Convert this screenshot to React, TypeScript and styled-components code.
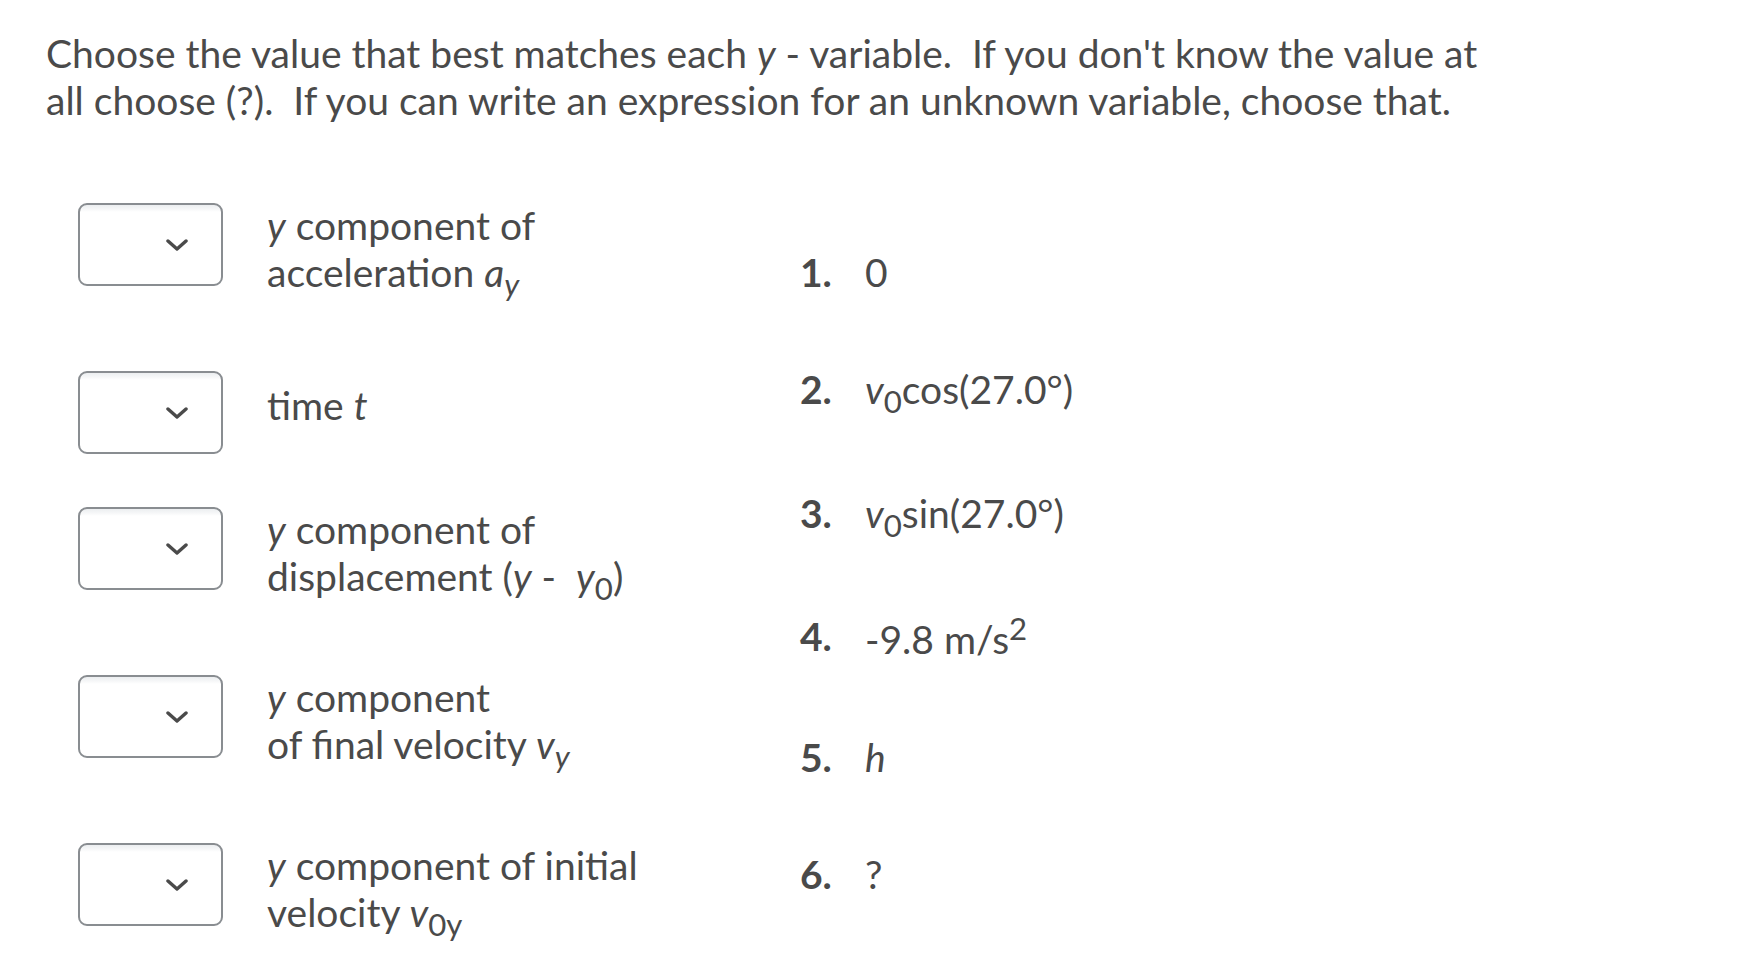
import React from 'react';
import styled, { createGlobalStyle } from 'styled-components';

const Global = createGlobalStyle`
  html, body { margin: 0; padding: 0; background: #ffffff; }
  body {
    font-family: Lato, "Noto Sans", "Liberation Sans", sans-serif;
    color: #4a4a4a;
  }
`;

const Page = styled.main`
  padding: 30px 0 0 46px;
  font-size: 39px;
  line-height: 46.6px;
`;

const Prompt = styled.p`
  margin: 0;
  max-width: 1460px;
`;

const Matching = styled.section`
  display: flex;
  align-items: flex-start;
  margin-top: 80px;
`;

const LeftColumn = styled.div`
  flex: none;
  width: 722px;
  margin-left: 32px;
  display: flex;
  flex-direction: column;
`;

const Row = styled.div<{ $single?: boolean }>`
  display: flex;
  align-items: flex-start;
  gap: 44px;
  height: ${p => (p.$single ? 136 : 168)}px;
`;

const SelectBox = styled.div`
  flex: none;
  box-sizing: border-box;
  width: 145px;
  height: 83px;
  border: 2px solid #898d91;
  border-radius: 9px;
  background: linear-gradient(to bottom, #eceef0 0px, #f6f7f8 4px, #ffffff 7px);
  display: flex;
  align-items: center;
  justify-content: flex-end;
  padding-right: 33px;
`;

const Label = styled.div<{ $single?: boolean }>`
  margin-top: ${p => (p.$single ? 11 : -1)}px;
`;

const Var = styled.i`
  font-style: italic;
`;

const Sub = styled.sub`
  font-size: 0.8em;
  line-height: 1;
  vertical-align: -0.3em;
`;

const Sup = styled.sup`
  font-size: 0.8em;
  line-height: 1;
  vertical-align: 0.45em;
`;

const RightColumn = styled.ol`
  list-style: none;
  margin: 0;
  padding: 46px 0 0 0;
  display: flex;
  flex-direction: column;
  gap: 71px;
`;

const Item = styled.li<{ $extraBelow?: number }>`
  display: flex;
  margin-bottom: ${p => p.$extraBelow ?? 0}px;
`;

const Num = styled.span`
  flex: none;
  width: 65px;
  font-weight: 700;
`;

const Chevron = () => (
  <svg width="22" height="12" viewBox="0 0 22 12" aria-hidden="true">
    <polyline
      points="2,2 11,10 20,2"
      fill="none"
      stroke="#4a4a4a"
      strokeWidth="3.4"
      strokeLinecap="round"
      strokeLinejoin="round"
    />
  </svg>
);

const Select = () => (
  <SelectBox role="combobox" aria-expanded="false">
    <Chevron />
  </SelectBox>
);

export default function App() {
  return (
    <>
      <Global />
      <Page>
        <Prompt>
          Choose the value that best matches each <Var>y</Var> - variable.&nbsp; If you don't know the value at all
          choose (?).&nbsp; If you can write an expression for an unknown variable, choose that.
        </Prompt>
        <Matching>
          <LeftColumn>
            <Row>
              <Select />
              <Label>
                <Var>y</Var> component of
                <br />
                acceleration <Var>a</Var>
                <Sub>
                  <Var>y</Var>
                </Sub>
              </Label>
            </Row>
            <Row $single>
              <Select />
              <Label $single>
                time <Var>t</Var>
              </Label>
            </Row>
            <Row>
              <Select />
              <Label>
                <Var>y</Var> component of
                <br />
                displacement (<Var>y</Var> -&nbsp; <Var>y</Var>
                <Sub>0</Sub>)
              </Label>
            </Row>
            <Row>
              <Select />
              <Label>
                <Var>y</Var> component
                <br />
                of final velocity <Var>v</Var>
                <Sub>
                  <Var>y</Var>
                </Sub>
              </Label>
            </Row>
            <Row>
              <Select />
              <Label>
                <Var>y</Var> component of initial
                <br />
                velocity <Var>v</Var>
                <Sub>0y</Sub>
              </Label>
            </Row>
          </LeftColumn>
          <RightColumn>
            <Item $extraBelow={-1}>
              <Num>1.</Num>
              <span>0</span>
            </Item>
            <Item $extraBelow={2}>
              <Num>2.</Num>
              <span>
                <Var>v</Var>
                <Sub>0</Sub>cos(27.0°)
              </span>
            </Item>
            <Item>
              <Num>3.</Num>
              <span>
                <Var>v</Var>
                <Sub>0</Sub>sin(27.0°)
              </span>
            </Item>
            <Item>
              <Num>4.</Num>
              <span>
                -9.8 m/s<Sup>2</Sup>
              </span>
            </Item>
            <Item>
              <Num>5.</Num>
              <span>
                <Var>h</Var>
              </span>
            </Item>
            <Item>
              <Num>6.</Num>
              <span>?</span>
            </Item>
          </RightColumn>
        </Matching>
      </Page>
    </>
  );
}
